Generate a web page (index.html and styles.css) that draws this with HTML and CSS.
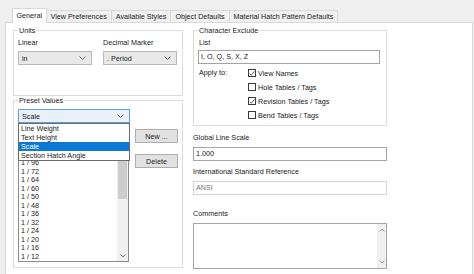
FILE: index.html
```html
<!DOCTYPE html>
<html>
<head>
<meta charset="utf-8">
<link rel="stylesheet" href="styles.css">
</head>
<body>
<div class="dlg">
  <div class="tabs">
    <div class="tab sel">General</div>
    <div class="tab">View Preferences</div>
    <div class="tab">Available Styles</div>
    <div class="tab">Object Defaults</div>
    <div class="tab">Material Hatch Pattern Defaults</div>
  </div>
  <div class="panel">
    <div class="col left">
      <fieldset class="grp units">
        <legend>Units</legend>
        <div class="pair">
          <div class="field">
            <div class="lbl">Linear</div>
            <div class="combo"><span>in</span><svg class="chev" width="7" height="4" viewBox="0 0 7 4"><path d="M0.5 0.5 L3.5 3.5 L6.5 0.5" fill="none" stroke="#6a6a6a"/></svg></div>
          </div>
          <div class="field">
            <div class="lbl">Decimal Marker</div>
            <div class="combo"><span>. Period</span><svg class="chev" width="7" height="4" viewBox="0 0 7 4"><path d="M0.5 0.5 L3.5 3.5 L6.5 0.5" fill="none" stroke="#6a6a6a"/></svg></div>
          </div>
        </div>
      </fieldset>
      <fieldset class="grp preset">
        <legend>Preset Values</legend>
        <div class="combo-wrap">
          <div class="combo focus"><span>Scale</span><svg class="chev" width="7" height="4" viewBox="0 0 7 4"><path d="M0.5 0.5 L3.5 3.5 L6.5 0.5" fill="none" stroke="#555"/></svg></div>
          <div class="dropdown">
            <div class="opt">Line Weight</div>
            <div class="opt">Text Height</div>
            <div class="opt on">Scale</div>
            <div class="opt">Section Hatch Angle</div>
          </div>
        </div>
        <div class="presetrow">
          <div class="listbox">
            <div class="items">
              <div class="it">1 / 96</div>
              <div class="it">1 / 72</div>
              <div class="it">1 / 64</div>
              <div class="it">1 / 60</div>
              <div class="it">1 / 50</div>
              <div class="it">1 / 48</div>
              <div class="it">1 / 36</div>
              <div class="it">1 / 32</div>
              <div class="it">1 / 24</div>
              <div class="it">1 / 20</div>
              <div class="it">1 / 16</div>
              <div class="it">1 / 12</div>
            </div>
            <div class="vscroll">
              <div class="thumb"></div>
              <div class="track"></div>
              <div class="arrow"><svg width="6" height="4" viewBox="0 0 6 4"><path d="M0.5 0.5 L3 3 L5.5 0.5" fill="none" stroke="#777"/></svg></div>
            </div>
          </div>
          <div class="btns">
            <div class="btn">New ...</div>
            <div class="btn">Delete</div>
          </div>
        </div>
      </fieldset>
    </div>
    <div class="col right">
      <fieldset class="grp excl">
        <legend>Character Exclude</legend>
        <div class="lbl">List</div>
        <div class="tb wide">I, O, Q, S, X, Z</div>
        <div class="apply">
          <div class="applylbl">Apply to:</div>
          <div class="checks">
            <div class="chk"><span class="box"><svg width="7" height="7" viewBox="0 0 7 7"><path d="M0.8 3.6 L2.7 5.6 L6.2 1" fill="none" stroke="#333" stroke-width="0.9"/></svg></span>View Names</div>
            <div class="chk"><span class="box"></span>Hole Tables / Tags</div>
            <div class="chk"><span class="box"><svg width="7" height="7" viewBox="0 0 7 7"><path d="M0.8 3.6 L2.7 5.6 L6.2 1" fill="none" stroke="#333" stroke-width="0.9"/></svg></span>Revision Tables / Tags</div>
            <div class="chk"><span class="box"></span>Bend Tables / Tags</div>
          </div>
        </div>
      </fieldset>
      <div class="lbl gap1">Global Line Scale</div>
      <div class="tb">1.000</div>
      <div class="lbl gap2">International Standard Reference</div>
      <div class="tb dis">ANSI</div>
      <div class="lbl gap3">Comments</div>
      <div class="memo">
        <div class="memo-text"></div>
        <div class="memo-scroll">
          <svg width="6" height="4" viewBox="0 0 6 4"><path d="M0.5 3.5 L3 1 L5.5 3.5" fill="none" stroke="#aaa"/></svg>
          <svg width="6" height="4" viewBox="0 0 6 4"><path d="M0.5 0.5 L3 3 L5.5 0.5" fill="none" stroke="#aaa"/></svg>
        </div>
      </div>
    </div>
  </div>
</div>
</body>
</html>
```
FILE: styles.css
```css
* { box-sizing: border-box; }
html, body { margin: 0; padding: 0; }
body {
  width: 474px;
  height: 274px;
  overflow: hidden;
  background: #efefef;
  font-family: "Liberation Sans", Arial, sans-serif;
  font-size: 7.2px;
  line-height: 9px;
  color: #1a1a1a;
}
.dlg { padding: 8px 0 0 5px; }
.tabs {
  display: flex;
  align-items: flex-end;
  height: 14px;
  margin-left: 7px;
  position: relative;
  z-index: 1;
}
.tab {
  height: 12px;
  line-height: 11px;
  padding: 0 4px;
  border: 1px solid #d9d9d9;
  border-bottom: none;
  background: #f0f0f0;
  margin-left: -1px;
  white-space: nowrap;
}
.tab.sel {
  height: 15px;
  line-height: 13px;
  padding: 0 3.5px;
  margin-left: 0;
  margin-bottom: -1px;
  background: #fff;
}
.panel {
  width: 468px;
  height: 262px;
  background: #fff;
  border: 1px solid #d9d9d9;
  display: flex;
  gap: 10px;
  padding: 3px 0 0 7px;
}
.col { display: flex; flex-direction: column; }
.col.left { width: 170px; }
.col.right { width: 194px; }
fieldset.grp {
  margin: 0;
  border: 1px solid #dcdcdc;
  padding: 0 4px;
  min-width: 0;
}
fieldset.grp legend {
  padding: 0 1px;
  line-height: 9px;
}
.lbl { line-height: 9px; white-space: nowrap; }
fieldset.grp.units { padding-top: 3px; padding-bottom: 30px; }
.pair { display: flex; gap: 11px; }
.field { width: 74px; display: flex; flex-direction: column; gap: 4px; }
.combo {
  height: 14px;
  border: 1px solid #b9b9b9;
  background: #e8e8e8;
  display: flex;
  align-items: center;
  justify-content: space-between;
  padding: 0 5px 0 3px;
}
.combo.focus {
  border-color: #5f9ed8;
  background: #e8f0f8;
}
.chev { display: block; }
fieldset.grp.preset { padding-top: 4px; padding-bottom: 5px; }
.combo-wrap { position: relative; width: 112px; z-index: 2; }
.dropdown {
  position: absolute;
  left: 0;
  top: 100%;
  width: 112px;
  border: 1px solid #6b6b6b;
  background: #fff;
}
.opt { height: 9px; line-height: 9px; padding-left: 2px; white-space: nowrap; }
.opt.on { background: #0a78d4; color: #fff; }
.presetrow { display: flex; gap: 6px; margin-top: 1px; }
.listbox {
  width: 112px;
  height: 138px;
  border: 1px solid #8c8c8c;
  display: flex;
  overflow: hidden;
}
.items { flex: 1; overflow: hidden; padding-top: 34px; }
.it { height: 8.5px; line-height: 8.5px; padding-left: 2px; white-space: nowrap; }
.vscroll {
  width: 11px;
  background: #f0f0f0;
  display: flex;
  flex-direction: column;
}
.thumb { height: 74px; background: #cdcdcd; margin: 0 1px; }
.track { flex: 1; }
.arrow { height: 11px; display: flex; align-items: center; justify-content: center; }
.btns { display: flex; flex-direction: column; gap: 11px; padding-top: 5px; }
.btn {
  width: 43px;
  height: 14px;
  border: 1px solid #adadad;
  background: #e1e1e1;
  display: flex;
  align-items: center;
  justify-content: center;
}
fieldset.grp.excl { padding: 3px 6px 3px 4px; }
.tb {
  height: 14px;
  border: 1px solid #a3a3a3;
  background: #fff;
  line-height: 12px;
  padding: 0 2px;
  white-space: nowrap;
}
.excl .lbl { margin-left: 1px; }
.excl .tb { margin-top: 3px; }
.tb.dis { border-color: #d3d3d3; color: #7a7a7a; }
.apply { display: flex; margin-top: 2px; }
.applylbl { width: 50px; line-height: 14px; padding-left: 1px; }
.checks { display: flex; flex-direction: column; }
.chk { height: 14px; display: flex; align-items: center; gap: 2px; white-space: nowrap; }
.box {
  width: 8px;
  height: 8px;
  border: 1px solid #3a3a3a;
  background: #fff;
  display: flex;
  align-items: center;
  justify-content: center;
}
.box svg { display: block; }
.gap1 { margin-top: 7px; margin-bottom: 5px; }
.gap2 { margin-top: 6px; margin-bottom: 5px; }
.gap3 { margin-top: 14px; margin-bottom: 4.5px; }
.memo {
  height: 46px;
  border: 1px solid #a3a3a3;
  display: flex;
}
.memo-text { flex: 1; }
.memo-scroll {
  width: 9px;
  background: #f0f0f0;
  display: flex;
  flex-direction: column;
  justify-content: space-between;
  align-items: center;
  padding: 4px 0;
}
.memo-scroll svg { display: block; }
```
